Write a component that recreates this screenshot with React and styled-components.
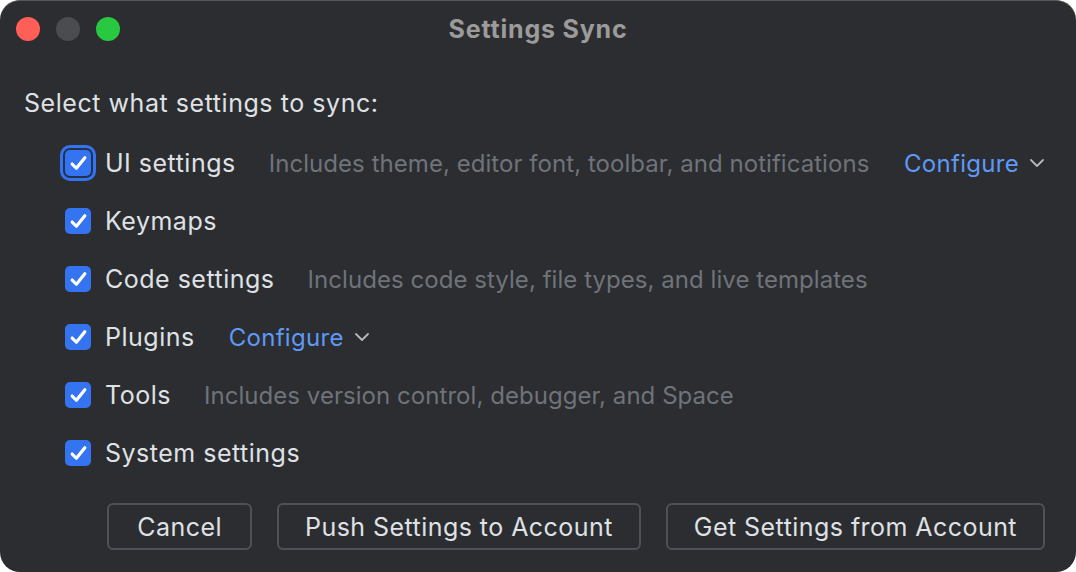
import React from 'react'
import styled, { createGlobalStyle } from 'styled-components'

const Global = createGlobalStyle`
	html, body {
		margin: 0;
		background: #ffffff;
	}
	body {
		font-family: Inter, 'Noto Sans', sans-serif;
		-webkit-font-smoothing: antialiased;
	}
`

const Window = styled.div`
	width: 1076px;
	height: 572px;
	box-sizing: border-box;
	background: #2b2d30;
	border-radius: 20px;
	border-top: 1px solid #55575c;
	display: flex;
	flex-direction: column;
	overflow: hidden;
`
const TitleBar = styled.div`
	height: 55px;
	display: grid;
	grid-template-columns: 1fr auto 1fr;
	align-items: center;
	padding: 0 16px;
`
const Lights = styled.div`
	display: flex;
	gap: 16px;
`
const Light = styled.span`
	width: 24px;
	height: 24px;
	border-radius: 50%;
	background: ${p => p.color};
`
const Title = styled.div`
	color: #9b9b9b;
	font-size: 25px;
	font-weight: 700;
	letter-spacing: 0.8px;
`
const Body = styled.div`
	padding: 32px 31px 0 24px;
	display: flex;
	flex-direction: column;
`
const Heading = styled.div`
	color: #dfe1e5;
	font-size: 25px;
	line-height: 30px;
	letter-spacing: 0.55px;
`
const List = styled.div`
	margin-top: 16px;
	padding-left: 41px;
	display: flex;
	flex-direction: column;
`
const Row = styled.div`
	height: 58px;
	display: flex;
	align-items: center;
`
const Box = styled.span`
	width: 26px;
	height: 26px;
	border-radius: 5px;
	background: #3574f0;
	display: flex;
	align-items: center;
	justify-content: center;
	flex-shrink: 0;
	box-shadow: ${p => p.focused ? '0 0 0 2px #23314d, 0 0 0 5px #3574f0' : 'none'};
`
const Label = styled.span`
	color: #dfe1e5;
	font-size: 25px;
	letter-spacing: 0.5px;
	margin-left: 14px;
`
const Hint = styled.span`
	color: #6f737a;
	font-size: 24px;
	letter-spacing: 0.05px;
	margin-left: 33px;
`
const Configure = styled.span`
	color: #5f99f6;
	font-size: 24px;
	letter-spacing: 0.3px;
	display: flex;
	align-items: center;
	gap: 10px;
	margin-left: ${p => p.push ? 'auto' : '34px'};
`
const Buttons = styled.div`
	margin-top: 21px;
	display: flex;
	justify-content: flex-end;
	gap: 25px;
`
const Button = styled.button`
	height: 47px;
	padding: 0 ${p => p.pad}px;
	background: transparent;
	border: 2px solid #4e5157;
	border-radius: 6px;
	color: #dfe1e5;
	font-family: Inter, 'Noto Sans', sans-serif;
	font-size: 25px;
	letter-spacing: 0.45px;
`

const Check = () => (
	<svg width="19" height="19" viewBox="0 0 18 18">
		<path d="M3 9.5 L7 13.5 L15 3.5" fill="none" stroke="#fff" strokeWidth="3" strokeLinecap="round" strokeLinejoin="round" />
	</svg>
)

const Chevron = () => (
	<svg width="16" height="10" viewBox="0 0 16 10">
		<path d="M2 2 L8 8 L14 2" fill="none" stroke="#b4b8bf" strokeWidth="1.8" strokeLinecap="round" strokeLinejoin="round" />
	</svg>
)

const items = [
	{ label: 'UI settings', hint: 'Includes theme, editor font, toolbar, and notifications', configure: 'right', focused: true },
	{ label: 'Keymaps' },
	{ label: 'Code settings', hint: 'Includes code style, file types, and live templates' },
	{ label: 'Plugins', configure: 'inline' },
	{ label: 'Tools', hint: 'Includes version control, debugger, and Space' },
	{ label: 'System settings' },
]

const App = () => (
	<>
		<Global />
		<Window>
			<TitleBar>
				<Lights>
					<Light color="#ff5f57" />
					<Light color="#4a4c50" />
					<Light color="#28c840" />
				</Lights>
				<Title>Settings Sync</Title>
				<div />
			</TitleBar>
			<Body>
				<Heading>Select what settings to sync:</Heading>
				<List>
					{items.map(item => (
						<Row key={item.label}>
							<Box focused={item.focused}><Check /></Box>
							<Label>{item.label}</Label>
							{item.hint && <Hint>{item.hint}</Hint>}
							{item.configure && (
								<Configure push={item.configure === 'right'}>Configure <Chevron /></Configure>
							)}
						</Row>
					))}
				</List>
				<Buttons>
					<Button pad={28}>Cancel</Button>
					<Button pad={26}>Push Settings to Account</Button>
					<Button pad={26}>Get Settings from Account</Button>
				</Buttons>
			</Body>
		</Window>
	</>
)

export default App
